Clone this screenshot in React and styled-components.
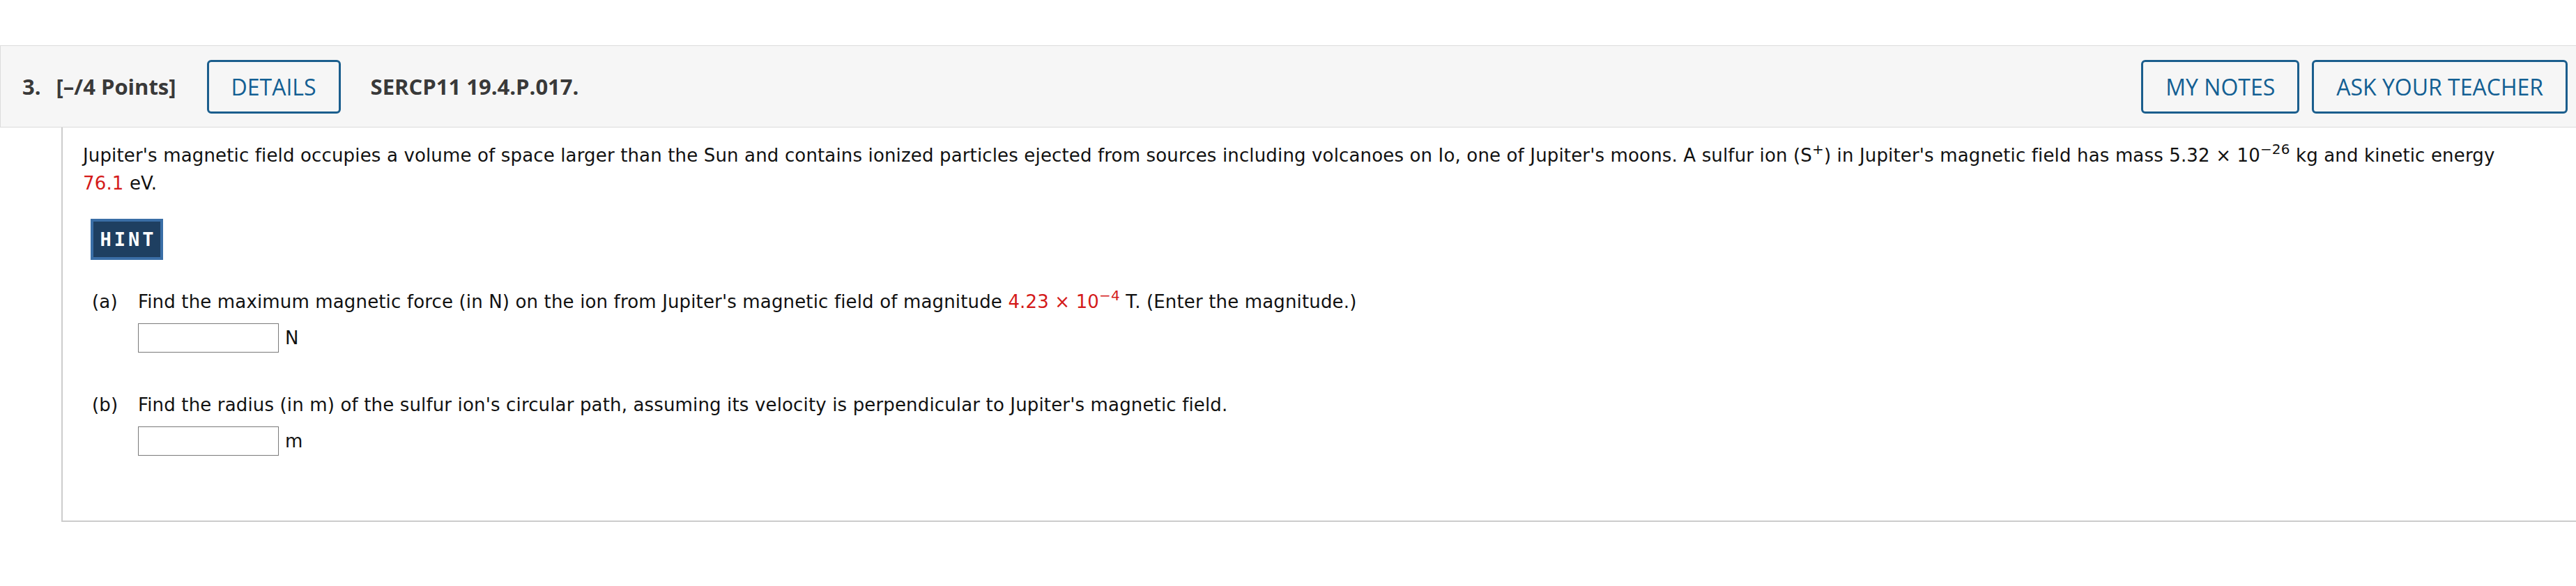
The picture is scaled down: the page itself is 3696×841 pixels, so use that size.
import React from 'react';
import styled, { createGlobalStyle } from 'styled-components';

const GlobalStyle = createGlobalStyle`
  html, body {
    margin: 0;
    padding: 0;
    background: #fff;
    overflow: hidden;
  }
`;

const Page = styled.div`
  padding-top: 65px;
  width: 3696px;
`;

const QuestionHeader = styled.div`
  display: flex;
  align-items: center;
  height: 116px;
  padding: 0 12px 0 31px;
  background: #f6f6f6;
  border-top: 1px solid #dcdcdc;
  border-bottom: 1px solid #dcdcdc;
  border-left: 1px solid #dcdcdc;
  font-family: "Open Sans", "Liberation Sans", sans-serif;
  font-size: 31px;
  color: #393939;
`;

const Number = styled.span`
  font-weight: 700;
  margin-right: 22px;
`;

const Points = styled.span`
  font-weight: 700;
  margin-right: 44px;
`;

const HeaderButton = styled.button`
  height: 77px;
  padding: 0 32px;
  background: transparent;
  border: 3px solid #1b5e8d;
  border-radius: 6px;
  color: #135f93;
  font-family: "Open Sans", "Liberation Sans", sans-serif;
  font-size: 32px;
  font-weight: 500;
  cursor: pointer;
`;

const Code = styled.span`
  font-weight: 700;
  margin-left: 43px;
`;

const ButtonGroup = styled.div`
  display: flex;
  gap: 18px;
  margin-left: auto;
`;

const Body = styled.div`
  margin-left: 88px;
  padding: 20px 30px 93px 29px;
  border-left: 2px solid #cccccc;
  border-bottom: 2px solid #cccccc;
  font-family: "DejaVu Sans", Verdana, sans-serif;
  font-size: 26px;
  letter-spacing: 0.15px;
  line-height: 40px;
  color: #111;
`;

const Para = styled.p`
  margin: 0;
  padding-right: 60px;
`;

const Red = styled.span`
  color: #d41a1a;
`;

const Sup = styled.sup`
  font-size: 20px;
  line-height: 0;
  vertical-align: 11px;
`;

const HintButton = styled.button`
  display: block;
  margin: 31px 0 0 11px;
  width: 104px;
  height: 59px;
  padding: 0 0 0 4px;
  background: #1e3f61;
  border: 4px solid #3a6ea6;
  color: #fff;
  font-family: "DejaVu Sans Mono", monospace;
  font-weight: 700;
  font-size: 27px;
  letter-spacing: 4px;
  cursor: pointer;
`;

const Part = styled.div`
  margin: ${props => props.$top}px 0 0 13px;
`;

const PartText = styled.div`
  display: grid;
  grid-template-columns: 66px 1fr;
`;

const AnswerRow = styled.div`
  display: flex;
  align-items: center;
  gap: 9px;
  margin: 11px 0 0 66px;
`;

const AnswerInput = styled.input`
  box-sizing: border-box;
  width: 202px;
  height: 42px;
  border: 1px solid #7a7a7a;
  background: #fff;
  font-family: "DejaVu Sans", sans-serif;
  font-size: 22px;
`;

const Unit = styled.span`
  line-height: 42px;
`;

export default function App() {
  return (
    <Page>
      <GlobalStyle />
      <QuestionHeader>
        <Number>3.</Number>
        <Points>[–/4 Points]</Points>
        <HeaderButton>DETAILS</HeaderButton>
        <Code>SERCP11 19.4.P.017.</Code>
        <ButtonGroup>
          <HeaderButton>MY NOTES</HeaderButton>
          <HeaderButton>ASK YOUR TEACHER</HeaderButton>
        </ButtonGroup>
      </QuestionHeader>
      <Body>
        <Para>
          Jupiter's magnetic field occupies a volume of space larger than the Sun and contains ionized particles
          ejected from sources including volcanoes on Io, one of Jupiter's moons. A sulfur ion (S<Sup>+</Sup>) in
          Jupiter's magnetic field has mass 5.32 × 10<Sup>−26</Sup> kg and kinetic energy <Red>76.1</Red> eV.
        </Para>
        <HintButton>HINT</HintButton>
        <Part $top={40}>
          <PartText>
            <span>(a)</span>
            <span>
              Find the maximum magnetic force (in N) on the ion from Jupiter's magnetic field of magnitude{' '}
              <Red>4.23 × 10<Sup>−4</Sup></Red> T. (Enter the magnitude.)
            </span>
          </PartText>
          <AnswerRow>
            <AnswerInput type="text" />
            <Unit>N</Unit>
          </AnswerRow>
        </Part>
        <Part $top={55}>
          <PartText>
            <span>(b)</span>
            <span>
              Find the radius (in m) of the sulfur ion's circular path, assuming its velocity is perpendicular to
              Jupiter's magnetic field.
            </span>
          </PartText>
          <AnswerRow>
            <AnswerInput type="text" />
            <Unit>m</Unit>
          </AnswerRow>
        </Part>
      </Body>
    </Page>
  );
}
